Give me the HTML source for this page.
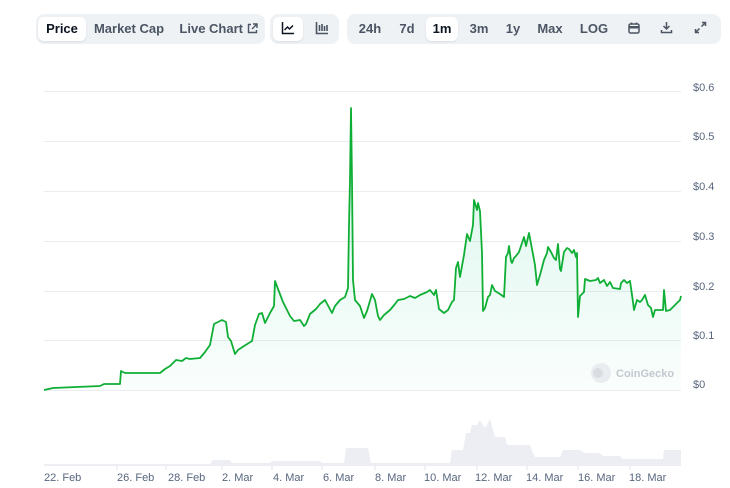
<!DOCTYPE html>
<html><head><meta charset="utf-8"><style>
body{margin:0;width:730px;height:488px;background:#fff;font-family:"Liberation Sans",sans-serif;overflow:hidden;position:relative}
.g{position:absolute;top:14px;height:30px;background:#eff2f5;border-radius:8px}
.b{position:absolute;top:3px;height:24px;line-height:24px;font-size:13px;font-weight:bold;color:#4b5563;text-align:center}
.b.a{background:#fff;border-radius:6px;color:#0d1421;box-shadow:0 1px 2px rgba(0,0,0,.08)}
.yl{position:absolute;left:693px;font-size:11px;color:#58667e}
.xl{position:absolute;top:472px;font-size:11px;color:#58667e}
</style></head><body>
<div class="g" style="left:36px;width:229px">
<div class="b a" style="left:2px;width:48px">Price</div>
<div class="b" style="left:56px;width:74px">Market Cap</div>
<div class="b" style="left:140px;width:85px">Live Chart <svg width="11" height="11" viewBox="0 0 11 11" style="vertical-align:-1px"><path d="M4 1.5H1.5V9.5H9.5V7M6 1H10V5M10 1L5 6" stroke="#4b5563" stroke-width="1.4" fill="none"/></svg></div>
</div>
<div class="g" style="left:270px;width:69px">
<div class="b a" style="left:3px;width:30px"><svg width="14" height="14" viewBox="0 0 14 14" style="vertical-align:-2px"><path d="M1.5 1V12.5H13M3.5 9L6.5 6L8.5 8L12 4.5" stroke="#0d1421" stroke-width="1.5" fill="none"/></svg></div>
<div class="b" style="left:37px;width:30px"><svg width="14" height="14" viewBox="0 0 14 14" style="vertical-align:-2px"><path d="M1.5 1V12.5H13M4.5 4V10M7 3V10M9.5 5V10M12 4V10" stroke="#4b5563" stroke-width="1.6" fill="none"/></svg></div>
</div>
<div class="g" style="left:347px;width:374px">
<div class="b" style="left:6px;width:34px">24h</div>
<div class="b" style="left:46px;width:28px">7d</div>
<div class="b a" style="left:79px;width:32px">1m</div>
<div class="b" style="left:116px;width:32px">3m</div>
<div class="b" style="left:152px;width:28px">1y</div>
<div class="b" style="left:185px;width:36px">Max</div>
<div class="b" style="left:228px;width:38px">LOG</div>
<div class="b" style="left:274px;width:26px"><svg width="12" height="12" viewBox="0 0 12 12" style="vertical-align:-1px"><rect x="1" y="2" width="10" height="9" rx="1.5" fill="none" stroke="#4b5563" stroke-width="1.5"/><rect x="1" y="4" width="10" height="2.5" fill="#4b5563"/><path d="M3.5 0.5V2.5M8.5 0.5V2.5" stroke="#4b5563" stroke-width="1.4"/></svg></div>
<div class="b" style="left:306px;width:26px"><svg width="13" height="13" viewBox="0 0 13 13" style="vertical-align:-1px"><path d="M6.5 1V8M3.5 5L6.5 8L9.5 5M1.5 9V11.5H11.5V9" stroke="#4b5563" stroke-width="1.5" fill="none"/></svg></div>
<div class="b" style="left:340px;width:26px"><svg width="13" height="13" viewBox="0 0 13 13" style="vertical-align:-1px"><path d="M8 1.5H11.5V5M11.5 1.5L7.5 5.5M5 11.5H1.5V8M1.5 11.5L5.5 7.5" stroke="#4b5563" stroke-width="1.5" fill="none"/></svg></div>
</div>
<svg width="730" height="488" style="position:absolute;left:0;top:0">
<defs><linearGradient id="gf" x1="0" y1="0" x2="0" y2="1"><stop offset="0" stop-color="#16c784" stop-opacity=".18"/><stop offset="1" stop-color="#16c784" stop-opacity=".02"/></linearGradient></defs>
<g stroke="#ececf0" stroke-width="1">
<path d="M44 91.5H681M44 141.5H681M44 191.5H681M44 241.5H681M44 291.5H681M44 340.5H681M44 390.5H681"/>
</g>
<path fill="#eceef3" d="M44 466 L44 464 L210 464 L213 460 L230 460 L232 463 L270 463 L272 461 L320 461 L322 463 L344 463 L346 448 L368 448 L371 463 L450 463 L452 450 L463 450 L466 433 L470 433 L472 425 L477 425 L480 420 L485 428 L490 419 L495 437 L505 437 L507 445 L530 445 L533 453 L535 457 L560 457 L563 450 L580 450 L585 453 L600 453 L603 456 L620 456 L623 459 L650 459 L652 459 L663 459 L664 450 L681 450 L681 466Z"/>
<g stroke="#e0e3ea"><path d="M117 466V470M166 466V470M222 466V470M272 466V470M322 466V470M375 466V470M425 466V470M477 466V470M527 466V470M578 466V470M630 466V470"/></g>
<path id="ln" fill="url(#gf)" d="M44 390 L53 388 L100 386 L104 384 L120 384 L121 371 L125 373 L160 373 L165 369 L170 366 L173 363 L176 360 L182 361 L186 358 L190 359 L200 358 L205 352 L210 345 L214 324 L222 320 L226 322 L228 337 L231 341 L235 354 L238 350 L244 346 L252 341 L255 325 L259 314 L262 313 L265 323 L270 313 L274 306 L275 281 L278 289 L283 302 L290 316 L294 321 L300 320 L304 326 L306 324 L310 314 L316 309 L320 304 L325 300 L332 313 L335 306 L340 300 L345 297 L348 288 L349 225 L350 180 L351 108 L352 180 L353 280 L355 300 L360 306 L364 318 L367 311 L372 294 L375 300 L378 316 L380 320 L384 315 L390 310 L395 304 L398 300 L404 299 L410 296 L415 298 L420 295 L427 292 L430 290 L434 295 L436 290 L439 309 L444 313 L448 310 L452 302 L454 300 L456 268 L458 262 L460 277 L464 255 L467 234 L470 241 L473 225 L474 200 L477 210 L478 203 L480 211 L482 253 L483 311 L485 308 L488 297 L490 295 L492 285 L495 291 L500 294 L504 297 L506 257 L508 253 L509 246 L511 261 L512 263 L514 258 L516 256 L519 252 L522 243 L524 237 L526 246 L529 233 L532 249 L535 265 L537 285 L540 275 L544 260 L547 253 L548 247 L551 252 L554 258 L556 260 L558 244 L560 269 L561 271 L564 252 L567 248 L569 249 L572 253 L574 250 L576 257 L577 253 L578 317 L580 296 L584 292 L585 279 L590 281 L596 280 L598 278 L600 283 L604 280 L607 286 L610 282 L613 288 L620 289 L621 283 L624 280 L627 283 L630 281 L633 302 L634 310 L637 300 L640 302 L642 300 L645 295 L648 305 L651 308 L653 317 L655 310 L663 310 L664 290 L666 311 L670 310 L675 305 L680 300 L681 296 L681 390 L44 390Z"/>
<path fill="none" stroke="#0fae35" stroke-width="1.8" stroke-linejoin="round" d="M44 390 L53 388 L100 386 L104 384 L120 384 L121 371 L125 373 L160 373 L165 369 L170 366 L173 363 L176 360 L182 361 L186 358 L190 359 L200 358 L205 352 L210 345 L214 324 L222 320 L226 322 L228 337 L231 341 L235 354 L238 350 L244 346 L252 341 L255 325 L259 314 L262 313 L265 323 L270 313 L274 306 L275 281 L278 289 L283 302 L290 316 L294 321 L300 320 L304 326 L306 324 L310 314 L316 309 L320 304 L325 300 L332 313 L335 306 L340 300 L345 297 L348 288 L349 225 L350 180 L351 108 L352 180 L353 280 L355 300 L360 306 L364 318 L367 311 L372 294 L375 300 L378 316 L380 320 L384 315 L390 310 L395 304 L398 300 L404 299 L410 296 L415 298 L420 295 L427 292 L430 290 L434 295 L436 290 L439 309 L444 313 L448 310 L452 302 L454 300 L456 268 L458 262 L460 277 L464 255 L467 234 L470 241 L473 225 L474 200 L477 210 L478 203 L480 211 L482 253 L483 311 L485 308 L488 297 L490 295 L492 285 L495 291 L500 294 L504 297 L506 257 L508 253 L509 246 L511 261 L512 263 L514 258 L516 256 L519 252 L522 243 L524 237 L526 246 L529 233 L532 249 L535 265 L537 285 L540 275 L544 260 L547 253 L548 247 L551 252 L554 258 L556 260 L558 244 L560 269 L561 271 L564 252 L567 248 L569 249 L572 253 L574 250 L576 257 L577 253 L578 317 L580 296 L584 292 L585 279 L590 281 L596 280 L598 278 L600 283 L604 280 L607 286 L610 282 L613 288 L620 289 L621 283 L624 280 L627 283 L630 281 L633 302 L634 310 L637 300 L640 302 L642 300 L645 295 L648 305 L651 308 L653 317 L655 310 L663 310 L664 290 L666 311 L670 310 L675 305 L680 300 L681 296"/>
<circle cx="601" cy="373" r="10" fill="#e6e8ec" opacity=".8"/>
<circle cx="598" cy="373" r="5" fill="#d4d7dd" opacity=".8"/>
<text x="616" y="377" font-size="11" fill="#c3c8d0" font-family="Liberation Sans,sans-serif" font-weight="bold">CoinGecko</text>
</svg>
<div class="yl" style="top:82px">$0.6</div>
<div class="yl" style="top:131px">$0.5</div>
<div class="yl" style="top:181px">$0.4</div>
<div class="yl" style="top:231px">$0.3</div>
<div class="yl" style="top:281px">$0.2</div>
<div class="yl" style="top:330px">$0.1</div>
<div class="yl" style="top:379px">$0</div>
<div class="xl" style="left:44px">22. Feb</div>
<div class="xl" style="left:117px">26. Feb</div>
<div class="xl" style="left:168px">28. Feb</div>
<div class="xl" style="left:222px">2. Mar</div>
<div class="xl" style="left:273px">4. Mar</div>
<div class="xl" style="left:323px">6. Mar</div>
<div class="xl" style="left:375px">8. Mar</div>
<div class="xl" style="left:424px">10. Mar</div>
<div class="xl" style="left:475px">12. Mar</div>
<div class="xl" style="left:526px">14. Mar</div>
<div class="xl" style="left:578px">16. Mar</div>
<div class="xl" style="left:629px">18. Mar</div>
</body></html>
